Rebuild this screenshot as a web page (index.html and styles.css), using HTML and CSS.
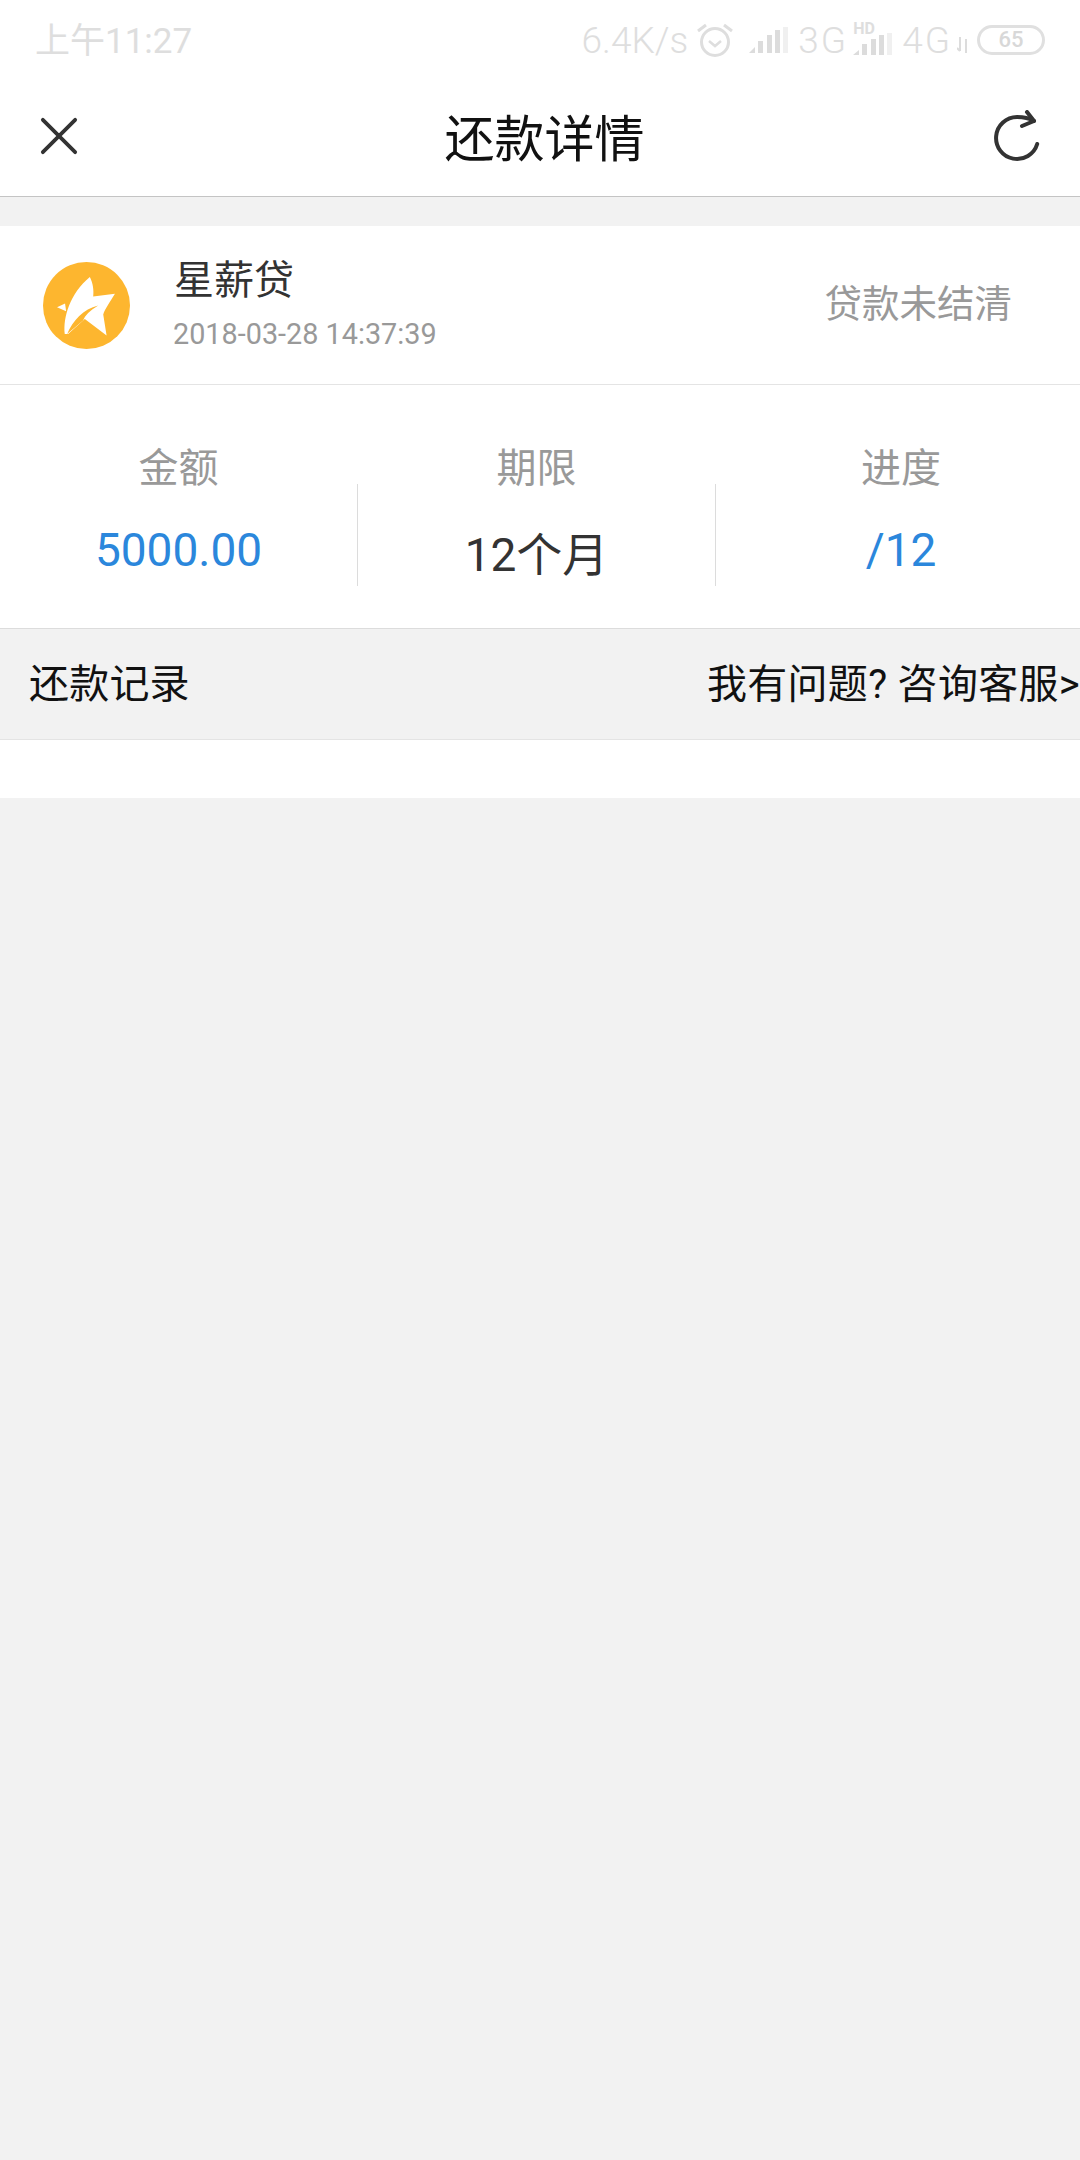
FILE: index.html
```html
<!DOCTYPE html>
<html lang="zh-CN">
<head>
    <meta charset="UTF-8">
    <title>还款详情</title>
    <meta name="viewport" content="width=device-width, initial-scale=1">
    <link rel="stylesheet" href="styles.css">
</head>
<body>
    <div class="statusbar">
        <span class="clock">上午11:27</span>
        <div class="status-right">
            <span class="speed">6.4K/s</span>
            <svg class="ic-alarm" viewBox="0 0 36 34" fill="none" stroke="#dedede">
                <circle cx="18" cy="19" r="13.500" stroke-width="3"/>
                <path d="M12 18l6 5 6-5" stroke-width="2.500"/>
                <path d="M1 8l8-6M35 8l-8-6" stroke-width="3"/>
            </svg>
            <svg class="ic-signal" viewBox="0 0 40 26">
                <path d="M0 26l6-6v6z" fill="#dcdcdc"/>
                <rect x="9" y="14" width="5" height="12" fill="#dcdcdc"/>
                <rect x="18" y="8" width="5" height="18" fill="#dcdcdc"/>
                <rect x="26" y="3" width="5" height="23" fill="#dcdcdc"/>
                <rect x="34" y="0" width="5" height="26" fill="#f0f0f0"/>
            </svg>
            <span class="net">3G</span>
            <div class="hd-signal">
                <span class="hd">HD</span>
                <svg class="ic-signal small" viewBox="0 0 40 22">
                    <path d="M0 22l6-5v5z" fill="#dcdcdc"/>
                    <rect x="9" y="11" width="5" height="11" fill="#dcdcdc"/>
                    <rect x="18" y="6" width="5" height="16" fill="#dcdcdc"/>
                    <rect x="26" y="2" width="5" height="20" fill="#dcdcdc"/>
                    <rect x="34" y="0" width="5" height="22" fill="#f0f0f0"/>
                </svg>
            </div>
            <span class="net">4G</span>
            <svg class="ic-updown" viewBox="0 0 12 16" fill="none" stroke="#dcdcdc" stroke-width="2">
                <path d="M3 0v14M0 11l3 3M9 16V2"/>
            </svg>
            <div class="battery"><span class="battery-num">65</span></div>
        </div>
    </div>

    <div class="navbar">
        <svg class="ic-close" viewBox="0 0 40 40" fill="none" stroke="#333" stroke-width="4" stroke-linecap="round">
            <path d="M3 3l34 34M37 3L3 37"/>
        </svg>
        <div class="nav-title">还款详情</div>
        <svg class="ic-refresh" viewBox="0 0 48 56" fill="none" stroke="#333" stroke-width="4" stroke-linecap="round" stroke-linejoin="round">
            <path d="M44.200 34A21 21 0 1 1 24 7C30 7 36 8 41 11"/>
            <path d="M34 2l7 9-12 5"/>
        </svg>
    </div>

    <div class="loan-head">
        <svg class="logo" viewBox="70 65 260 260">
            <circle cx="200" cy="195" r="130" fill="#fdb62f"/>
            <path d="M210 110C220 130 222 150 220 168L285 160C270 185 255 205 250 222L260 285L195 235L145 280L135 280C130 230 150 160 210 110Z" fill="#fff"/>
            <path d="M142 280C160 240 190 205 235 195C210 210 195 225 190 240Z" fill="#fdb62f"/>
            <path d="M112 200L136 189L139 212Z" fill="#fff"/>
        </svg>
        <div class="loan-info">
            <div class="loan-name">星薪贷</div>
            <div class="loan-date">2018-03-28 14:37:39</div>
        </div>
        <div class="loan-state">贷款未结清</div>
    </div>

    <div class="stats">
        <div class="stat first">
            <div class="stat-label">金额</div>
            <div class="stat-value blue">5000.00</div>
        </div>
        <div class="divider"></div>
        <div class="stat second">
            <div class="stat-label">期限</div>
            <div class="stat-value term">12个月</div>
        </div>
        <div class="divider"></div>
        <div class="stat third">
            <div class="stat-label">进度</div>
            <div class="stat-value blue">/12</div>
        </div>
    </div>

    <div class="record-bar">
        <span class="record-title">还款记录</span>
        <span class="record-help">我有问题? 咨询客服&gt;</span>
    </div>

    <div class="record-list"></div>
</body>
</html>
```

FILE: styles.css
```css
html, body {
    margin: 0;
    padding: 0;
}

body {
    width: 1080px;
    min-height: 2160px;
    background: #f2f2f2;
    font-family: Roboto, "Noto Sans CJK SC", sans-serif;
    overflow: hidden;
}

/* status bar */
.statusbar {
    height: 80px;
    background: #fff;
    color: #dedede;
    display: flex;
    align-items: center;
    justify-content: space-between;
    padding: 0 35px 0 35px;
    box-sizing: border-box;
}

.clock {
    font-size: 35px;
    margin-bottom: 6px;
}

.status-right {
    display: flex;
    align-items: center;
}

.speed {
    font-size: 37px;
    font-weight: 300;
    margin-right: 9px;
}

.ic-alarm {
    width: 36px;
    height: 34px;
    margin-right: 16px;
}

.ic-signal {
    width: 40px;
    height: 26px;
    margin-right: 9px;
}

.ic-signal.small {
    height: 22px;
    margin-right: 0;
    display: block;
}

.net {
    font-size: 37px;
    font-weight: 300;
    letter-spacing: 2px;
    margin-right: 5px;
}

.hd-signal {
    width: 40px;
    margin-right: 9px;
}

.hd {
    display: block;
    font-size: 16px;
    font-weight: 700;
    line-height: 8px;
}

.ic-updown {
    width: 12px;
    height: 16px;
    margin: 10px 8px 0 0;
}

.battery {
    width: 68px;
    height: 30px;
    box-sizing: border-box;
    border: 3px solid #e0e0e0;
    border-radius: 15px;
    text-align: center;
}

.battery-num {
    display: block;
    font-size: 22px;
    font-weight: 500;
    line-height: 24px;
    color: #d8d8d8;
}

/* nav */
.navbar {
    height: 117px;
    background: #fff;
    border-bottom: 1px solid #c4c4c4;
    box-sizing: border-box;
    display: flex;
    align-items: center;
    justify-content: space-between;
    padding: 0 39px 0 40px;
}

.ic-close {
    width: 38px;
    height: 38px;
    margin-bottom: 4px;
}

.ic-refresh {
    width: 48px;
    height: 56px;
}

.nav-title {
    font-size: 50px;
    color: #111;
    margin: 0 0 6px 18px;
}

/* loan header */
.loan-head {
    margin-top: 29px;
    height: 159px;
    background: #fff;
    border-bottom: 1px solid #e4e4e4;
    box-sizing: border-box;
    display: flex;
    align-items: center;
    padding: 0 68px 0 43px;
}

.logo {
    width: 87px;
    height: 87px;
}

.loan-info {
    flex: 1;
    margin: 0 0 6px 43px;
}

.loan-name {
    font-size: 40px;
    line-height: 56px;
    color: #333;
    margin-bottom: 7px;
    padding-left: 1px;
}

.loan-date {
    font-size: 28.8px;
    line-height: 36px;
    color: #999;
}

.loan-state {
    font-size: 37.5px;
    color: #999;
    margin-bottom: 9px;
}

/* amount / term / progress */
.stats {
    height: 244px;
    background: #fff;
    border-bottom: 1px solid #dcdcdc;
    box-sizing: border-box;
    display: flex;
    align-items: flex-start;
}

.stat {
    text-align: center;
    padding-top: 54px;
}

.stat.first {
    width: 357px;
}

.stat.second {
    width: 357px;
}

.stat.third {
    width: 364px;
    padding-left: 6px;
    box-sizing: border-box;
}

.divider {
    width: 1px;
    height: 102px;
    margin-top: 99px;
    background: #dcdcdc;
}

.stat-label {
    font-size: 40px;
    line-height: 60px;
    color: #999;
}

.stat-value {
    font-size: 46px;
    line-height: 60px;
    margin-top: 21px;
}

.stat-value.blue {
    color: #2b87dc;
}

.stat-value.term {
    color: #333;
    margin-top: 26px;
}

/* record bar */
.record-bar {
    height: 111px;
    border-bottom: 1px solid #e4e4e4;
    box-sizing: border-box;
    display: flex;
    align-items: center;
    justify-content: space-between;
    padding: 0 0 6px 29px;
    font-size: 40px;
    color: #111;
    white-space: nowrap;
}

.record-title {
    letter-spacing: 0.2px;
}

.record-help {
    letter-spacing: 0.3px;
}

.record-list {
    height: 58px;
    background: #fff;
}
```
